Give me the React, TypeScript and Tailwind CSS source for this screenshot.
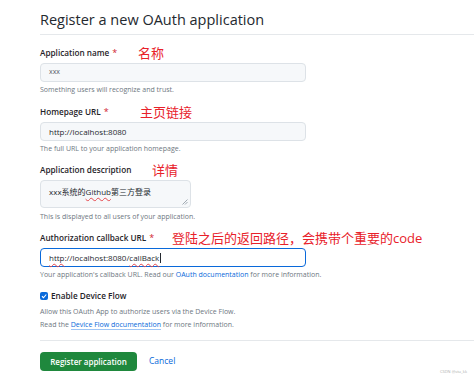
import React from 'react';

const font = { fontFamily: '"Open Sans", "Noto Sans CJK SC", sans-serif' };

function Label({ text, width, note, required = true }: { text: string; width: string; note: string; required?: boolean }) {
  return (
    <div className="flex h-[16px] items-center">
      <span className={`${width} shrink-0 text-[8.2px] font-semibold text-[#1f2328]`}>
        {text}
        {required && <span className="ml-[3px] text-[9px] font-normal text-[#d1242f]">*</span>}
      </span>
      <span className="text-[13px] leading-none text-[#e8212a]">{note}</span>
    </div>
  );
}

function Hint({ children }: { children: React.ReactNode }) {
  return <p className="h-[12px] text-[7px] leading-[12px] text-[#6e7781]">{children}</p>;
}

const squiggle = 'underline decoration-[#e5484d] decoration-wavy decoration-[0.5px] underline-offset-2';

export default function App() {
  return (
    <div className="relative h-[380px] w-[474px] overflow-hidden bg-white" style={font}>
      <div className="pl-[40px] pt-[6px]">
        <h2 className="flex h-[29px] items-center border-b border-[#e5e8eb] text-[14.5px] text-[#24292f]">
          Register a new OAuth application
        </h2>

        <div className="mt-[10px]">
          <Label text="Application name" width="w-[98px]" note="名称" />
          <div className="mt-[2px] flex h-[19px] w-[266px] items-center rounded-[4px] border border-[#dde2e7] bg-[#f6f8fa] px-[8px] text-[7px] text-[#57606a]">
            xxx
          </div>
          <div className="mt-[2px]">
            <Hint>Something users will recognize and trust.</Hint>
          </div>
        </div>

        <div className="mt-[8px]">
          <Label text="Homepage URL" width="w-[100px]" note="主页链接" />
          <div className="mt-[2px] flex h-[19px] w-[266px] items-center rounded-[4px] border border-[#dde2e7] bg-[#f6f8fa] px-[8px] text-[8px] text-[#24292f]">
            http://localhost:8080
          </div>
          <div className="mt-[2px]">
            <Hint>The full URL to your application homepage.</Hint>
          </div>
        </div>

        <div className="mt-[7px]">
          <Label text="Application description" width="w-[112px]" note="详情" required={false} />
          <div className="relative mt-[2px] h-[28px] w-[151px] rounded-[4px] border border-[#dde2e7] bg-[#f6f8fa] px-[8px] text-[#24292f]">
            <div className="flex h-[21px] items-center whitespace-nowrap text-[8px]">
              xxx系统的<span className={squiggle}>Github</span>第三方登录
            </div>
            <svg className="absolute bottom-[2px] right-[2px]" width="6" height="6" viewBox="0 0 6 6">
              <path d="M5.5 0.5 L0.5 5.5 M5.5 3 L3 5.5" stroke="#8c959f" strokeWidth="0.8" />
            </svg>
          </div>
          <div className="mt-[3px]">
            <Hint>This is displayed to all users of your application.</Hint>
          </div>
        </div>

        <div className="mt-[7px]">
          <Label text="Authorization callback URL" width="w-[132px]" note="登陆之后的返回路径，会携带个重要的code" />
          <div className="mt-[2px] flex h-[19px] w-[266px] items-center rounded-[4px] border-[1.5px] border-[#0969da] bg-white px-[8px] text-[8px] text-[#24292f]">
            <span className={squiggle}>http</span>
            ://localhost:8080/
            <span className={squiggle}>callBack</span>
            <span className="ml-[1px] h-[10px] w-[1px] bg-[#24292f]" />
          </div>
          <div className="mt-[2px]">
            <Hint>
              Your application's callback URL. Read our <span className="text-[#0969da]">OAuth documentation</span> for more information.
            </Hint>
          </div>
        </div>

        <div className="mt-[7px] flex h-[16px] items-center gap-[3px]">
          <span className="flex h-[8px] w-[8px] items-center justify-center rounded-[2px] bg-[#0969da]">
            <svg width="6" height="6" viewBox="0 0 12 12">
              <path d="M2 6.5 L5 9.5 L10.5 3" stroke="white" strokeWidth="2.2" fill="none" />
            </svg>
          </span>
          <span className="text-[8.2px] font-semibold text-[#1f2328]">Enable Device Flow</span>
        </div>
        <div className="mt-[2px]">
          <Hint>Allow this OAuth App to authorize users via the Device Flow.</Hint>
        </div>
        <div className="mt-[1px]">
          <Hint>
            Read the <span className="border-b border-[#9ec5f5] text-[#0969da]">Device Flow documentation</span> for more information.
          </Hint>
        </div>

        <div className="mt-[9px] border-t border-[#e5e8eb]" />

        <div className="mt-[11px] flex h-[19px] items-center">
          <button className="flex h-[19px] w-[97px] items-center justify-center rounded-[4px] bg-[#1f883d] text-[8px] font-semibold text-white">
            Register application
          </button>
          <span className="ml-[12px] text-[8.5px] font-medium text-[#0969da]">Cancel</span>
        </div>
      </div>

      <span className="absolute bottom-[5px] right-[7px] text-[4px] text-[#b0b0b0]">CSDN @stu_kk</span>
    </div>
  );
}
